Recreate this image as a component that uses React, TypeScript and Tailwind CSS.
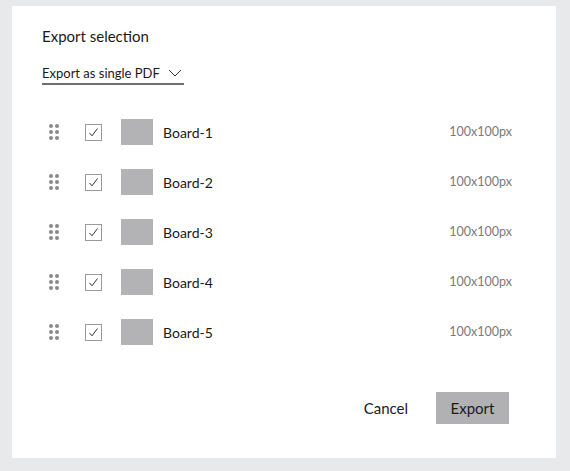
import React, { useState } from 'react';

const boards = ['Board-1', 'Board-2', 'Board-3', 'Board-4', 'Board-5'];

const DragHandle: React.FC = () => (
  <div className="grid grid-cols-2 gap-x-[2px] gap-y-[2px] w-[10px]">
    {Array.from({ length: 6 }).map((_, i) => (
      <span key={i} className="block w-[4px] h-[4px] rounded-full bg-[#8a8a8a]" />
    ))}
  </div>
);

const Check: React.FC<{ checked: boolean; onClick: () => void }> = ({ checked, onClick }) => (
  <button
    type="button"
    onClick={onClick}
    className="w-[17px] h-[17px] border border-[#9a9a9a] bg-white flex items-center justify-center"
  >
    {checked && (
      <svg width="11" height="11" viewBox="0 0 11 11" fill="none">
        <path d="M1.5 6 L4 8.8 L9.5 1.5" stroke="#333" strokeWidth="1" />
      </svg>
    )}
  </button>
);

export default function App() {
  const [checked, setChecked] = useState<boolean[]>(boards.map(() => true));

  return (
    <div className="w-[570px] h-[471px] bg-[#e8e9ea] pt-[6px] pl-[12px] font-['Lato',sans-serif] text-[#1a1a1a]">
      <div className="w-[544px] h-[452px] bg-white pl-[30px] pr-[44px] pt-[20px] flex flex-col">
        <h2 className="text-[15px] leading-[20px]">Export selection</h2>

        <div className="mt-[18px] self-start w-[142px] border-b-2 border-[#6e6e6e] flex items-center pb-[1px]">
          <span className="text-[13px] leading-[18px] whitespace-nowrap">Export as single PDF</span>
          <svg width="14" height="8" viewBox="0 0 14 8" fill="none" className="ml-auto mr-[2px]">
            <path d="M1 1 L7 7 L13 1" stroke="#333" strokeWidth="1" />
          </svg>
        </div>

        <div className="mt-[22px] flex flex-col">
          {boards.map((b, i) => (
            <div key={b} className="h-[50px] flex items-center">
              <div className="ml-[7px] w-[10px]">
                <DragHandle />
              </div>
              <div className="ml-[26px]">
                <Check
                  checked={checked[i]}
                  onClick={() => setChecked(checked.map((c, j) => (j === i ? !c : c)))}
                />
              </div>
              <div className="ml-[19px] w-[32px] h-[26px] bg-[#b3b3b5]" />
              <span className="ml-[10px] text-[14px]">{b}</span>
              <span className="ml-auto text-[12.5px] text-[#7a7a7a]">100x100px</span>
            </div>
          ))}
        </div>

        <div className="mt-[35px] mr-[3px] flex items-center justify-end">
          <button type="button" className="text-[15px] mr-[28px]">Cancel</button>
          <button type="button" className="w-[73px] h-[32px] bg-[#b1b1b3] text-[15px]">Export</button>
        </div>
      </div>
    </div>
  );
}
